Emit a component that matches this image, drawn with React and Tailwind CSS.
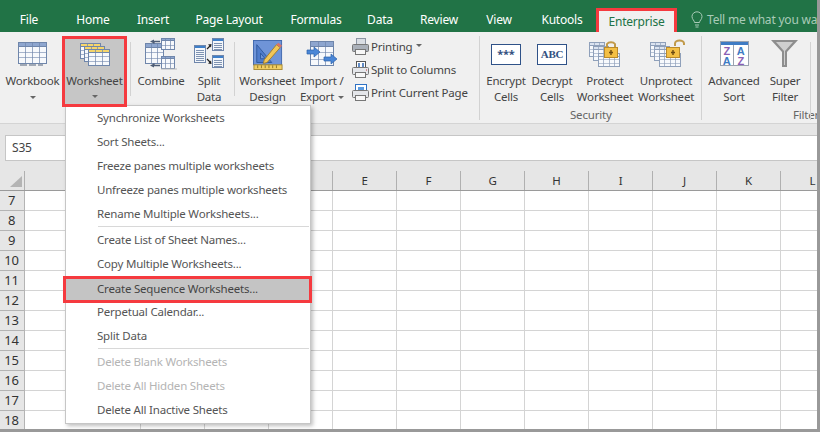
const TABS = [
  ['File', 58], ['Home', 70], ['Insert', 50], ['Page Layout', 102], ['Formulas', 72],
  ['Data', 56], ['Review', 62], ['View', 58], ['Kutools', 68],
]

const MENU = [
  ['Synchronize Worksheets'], ['Sort Sheets...'], ['Freeze panes multiple worksheets'],
  ['Unfreeze panes multiple worksheets'], ['Rename Multiple Worksheets...'], 'sep',
  ['Create List of Sheet Names...'], ['Copy Multiple Worksheets...'],
  ['Create Sequence Worksheets...', 'active'], ['Perpetual Calendar...'], ['Split Data'], 'sep',
  ['Delete Blank Worksheets', 'off'], ['Delete All Hidden Sheets', 'off'], ['Delete All Inactive Sheets'],
]

// A-D sit under the open menu
const COLS = ['', '', '', '', 'E', 'F', 'G', 'H', 'I', 'J', 'K', 'L']
const ROWS = [7, 8, 9, 10, 11, 12, 13, 14, 15, 16, 17, 18]

function Sheet({ x, y, w, h, head = '#8ea6cf', cols = 3, rows = 3, line = '#6f86ab' }) {
  const headH = Math.round(h / 5)
  return (
    <g>
      <rect x={x + 0.5} y={y + 0.5} width={w} height={h} fill="#f7f9fc" stroke={line} />
      <rect x={x + 0.5} y={y + 0.5} width={w} height={headH} fill={head} stroke={line} />
      {Array.from({ length: cols - 1 }, (_, i) => {
        const cx = Math.round(x + ((i + 1) * w) / cols) + 0.5
        return <path key={i} d={`M${cx} ${y}V${y + h}`} stroke={line} strokeOpacity="0.7" />
      })}
      {Array.from({ length: rows - 1 }, (_, i) => {
        const cy = Math.round(y + headH + ((i + 1) * (h - headH)) / rows) + 0.5
        return <path key={i} d={`M${x} ${cy}H${x + w}`} stroke={line} strokeOpacity="0.6" />
      })}
    </g>
  )
}

function Doc({ x, y, h = 13 }) {
  const lines = []
  for (let ly = y + 5.5; ly < y + h - 1; ly += 2) lines.push(`M${x + 2} ${ly}h8`)
  return (
    <g>
      <rect x={x + 0.5} y={y + 0.5} width="11" height={h - 1} fill="#f4f7fb" stroke="#6f86ab" />
      <rect x={x + 1} y={y + 1} width="10" height="2" fill="#3d7fc9" />
      <path d={lines.join('')} stroke="#7f93b2" />
    </g>
  )
}

function Lock({ x, y, open }) {
  return (
    <g>
      {open
        ? <path d={`M${x + 9} ${y + 6}V${y + 3.5}a4.5 3 0 0 1 9 0V${y + 5}`} fill="none" stroke="#c19a4a" strokeWidth="2" />
        : <path d={`M${x + 3} ${y + 7}V${y + 4}a4.5 3 0 0 1 8 0V${y + 7}`} fill="none" stroke="#c19a4a" strokeWidth="2" />}
      <rect x={x + 0.5} y={y + 7.5} width="13" height="10" fill="#f3bf45" stroke="#b98a2c" />
      <path d={`M${x + 7} ${y + 10}v5M${x + 5} ${y + 12.5}h4`} stroke="#6b4a12" strokeWidth="1.4" />
    </g>
  )
}

function Arrow({ x, y }) {
  return <path d={`M${x} ${y + 3}h7v-3l6 5-6 5v-3h-7z`} fill="#4a86d6" stroke="#2d62ab" strokeWidth="0.7" />
}

function WorkbookIcon() {
  return (
    <svg width="30" height="25" className="mt-[6px]">
      <Sheet x={0} y={0} w={28} h={21} cols={4} />
      <path d="M2 23h7M11 23h7M20 23h5" stroke="#a0a8b5" strokeWidth="2" />
    </svg>
  )
}

function WorksheetIcon() {
  return (
    <svg width="30" height="24" className="mt-[4px]">
      <Sheet x={0} y={0} w={20} h={15} head="#f5d56a" cols={3} />
      <Sheet x={4} y={3} w={20} h={15} head="#f5d56a" cols={3} />
      <Sheet x={8} y={6} w={21} h={16} head="#f5d56a" cols={3} />
    </svg>
  )
}

function CombineIcon() {
  return (
    <svg width="32" height="32" className="mt-[2px]">
      <Sheet x={0} y={5} w={18} h={20} cols={3} />
      <Sheet x={16} y={0} w={13} h={11} cols={3} rows={2} />
      <Sheet x={16} y={18} w={13} h={12} cols={3} rows={2} />
      <path d="M15 3.500H9v2M15 27.500H9v-2" fill="none" stroke="#4d5c75" strokeWidth="1.3" />
      <path d="M5 3.500l4-2v4zM5 27.500l4-2v4z" fill="#4d5c75" />
      <path d="M16 31h16" stroke="#b9b9b9" />
    </svg>
  )
}

function SplitIcon() {
  return (
    <svg width="31" height="30" className="mt-[2px]">
      <Doc x={0} y={7} h={18} />
      <Doc x={18} y={0} />
      <Doc x={18} y={17} />
      <path d="M13 11l3-3M13 21l3 3" stroke="#222" strokeWidth="1.2" />
      <path d="M17.500 6l-3.500 .5 3 3zM17.500 26l-3.500-.5 3-3z" fill="#222" />
    </svg>
  )
}

function DesignIcon() {
  return (
    <svg width="30" height="30" viewBox="0 0 32 32" className="mt-[4px]">
      <rect x="0.500" y="0.500" width="30" height="26" fill="#6f94d8" stroke="#3f68ad" />
      <path d="M4 5l16 19H4zM8 14v6h5z" fill="#4f7ccb" fillRule="evenodd" stroke="#2f5a9f" />
      <path d="M12 21L25 5l4 3-14 16-4 1z" fill="#f2c658" stroke="#a37f2a" />
      <path d="M25 5l2-2 4 3-2 2z" fill="#d9736a" />
      <rect x="1" y="26.500" width="30" height="5" fill="#f1cf63" stroke="#a88a34" />
      <path d="M5 27v3M9 27v3M13 27v3M17 27v3M21 27v3M25 27v3" stroke="#8d7326" />
    </svg>
  )
}

function ImportIcon() {
  return (
    <svg width="32" height="26" className="mt-[5px]">
      <Sheet x={4} y={0} w={23} h={24} cols={3} rows={3} />
      <Arrow x={1} y={6} />
      <Arrow x={18} y={13} />
    </svg>
  )
}

function PrinterIcon({ kind }) {
  return (
    <svg width="17" height="17">
      {kind === 0 && <rect x="4.500" y="0.500" width="9" height="6" fill="#d9dde3" stroke="#8c95a3" />}
      {kind === 1 && <g><rect x="4.500" y="0.500" width="9" height="7" fill="#fff" stroke="#555" /><path d="M7 2v4M11 2v4" stroke="#3a6fb8" strokeWidth="1.6" /></g>}
      {kind === 2 && <g><rect x="3.500" y="0.500" width="11" height="8" fill="#fff" stroke="#2f72c4" /><rect x="6" y="3" width="6" height="3" fill="#5b9be0" /></g>}
      <rect x="0.500" y="6.500" width="16" height="7" rx="1" fill={kind === 0 ? '#aab0b9' : '#e4e6ea'} stroke="#777" />
      <rect x="3.500" y="11.500" width="10" height="5" fill="#f7f7f7" stroke="#777" />
      {kind === 1 && <path d="M14 9h1" stroke="#c33" />}
    </svg>
  )
}

function SheetsLock({ open }) {
  return (
    <svg width="32" height="28" className="mt-[4px] overflow-visible">
      <Sheet x={0} y={2} w={15} h={14} head="#dbe3f0" line="#8fa0ba" cols={3} />
      <Sheet x={4} y={6} w={15} h={14} head="#dbe3f0" line="#8fa0ba" cols={3} />
      <Sheet x={9} y={13} w={21} h={13} head="#f0f3f8" line="#8fa0ba" cols={4} />
      <Lock x={open ? 16 : 15} y={0} open={open} />
    </svg>
  )
}

function CipherIcon({ children, serif }) {
  return (
    <div className={`mt-[8px] flex h-[21px] w-[30px] items-center justify-center border border-[#2f5288] bg-white text-[11px] font-bold text-[#33507f] ${serif ? "font-['Liberation_Serif',serif]" : ''}`}>
      {children}
    </div>
  )
}

function SortIcon() {
  return (
    <div className="mt-[5px] flex h-[25px] w-[29px] flex-col border border-[#9aa3b0] bg-white">
      <div className="h-[3px] shrink-0 bg-[#3f7cc4]" />
      <div className="grid flex-1 grid-cols-2 text-center font-['Liberation_Sans',sans-serif] text-[11px] leading-[10px] font-bold tracking-normal">
        <span className="border-r border-[#9aa3b0] pt-[1px]"><span className="block text-[#8a5fb5]">Z</span><span className="block text-[#3f7cc4]">A</span></span>
        <span className="pt-[1px]"><span className="block text-[#3f7cc4]">A</span><span className="block text-[#8a5fb5]">Z</span></span>
      </div>
    </div>
  )
}

function FunnelIcon() {
  return (
    <svg width="28" height="27" className="mt-[4px]">
      <path d="M0 0h27L16 12v15h-5V12z" fill="#8e8e8e" />
      <path d="M5 2h17l-8 9v14h-1V11z" fill="#cfcfcf" />
    </svg>
  )
}

function Caret({ className = '' }) {
  return <span className={`inline-block border-x-[3px] border-t-[3px] border-x-transparent border-t-[#666] ${className}`} />
}

function RibbonButton({ w, icon, lines, caret, active }) {
  return (
    <div className={`flex shrink-0 flex-col items-center whitespace-nowrap ${w} ${active ? 'relative z-30 h-[71px] border-[3px] border-[#f53a3f] bg-[#c6c6c6]' : 'h-[69px]'}`}>
      <div className={`flex shrink-0 justify-center ${active ? 'h-[34px]' : 'h-[37px]'}`}>{icon}</div>
      <div className="h-4 leading-4">{lines[0]}</div>
      {lines[1] && <div className="h-4 leading-4">{lines[1]}{caret === 'inline' && <Caret className="mb-[2px] ml-1" />}</div>}
      {caret === true && <div className="flex h-4 items-center justify-center"><Caret /></div>}
    </div>
  )
}

function Sep({ className }) {
  return <div className={`w-px shrink-0 bg-[#d2d2d2] ${className}`} />
}

function SmallButton({ kind, children }) {
  return (
    <div className="flex h-[23px] items-center gap-[2px] whitespace-nowrap">
      <PrinterIcon kind={kind} />
      {children}
    </div>
  )
}

function Ribbon() {
  return (
    <div className="relative flex h-[92px] shrink-0 border-b border-[#d4d4d4] bg-[#f0f0f0] pl-[3px] pt-1 text-[#444]">
      <RibbonButton w="w-[59px]" icon={<WorkbookIcon />} lines={['Workbook']} caret />
      <RibbonButton w="w-[65px]" icon={<WorksheetIcon />} lines={['Worksheet']} caret active />
      <Sep className="ml-[3px] mt-[6px] h-[54px]" />
      <RibbonButton w="w-[60px]" icon={<CombineIcon />} lines={['Combine']} />
      <RibbonButton w="w-[36px]" icon={<SplitIcon />} lines={['Split', 'Data']} />
      <Sep className="ml-[7px] mt-[6px] h-[54px]" />
      <RibbonButton w="w-[65px]" icon={<DesignIcon />} lines={['Worksheet', 'Design']} />
      <RibbonButton w="w-[44px]" icon={<ImportIcon />} lines={['Import /', 'Export']} caret="inline" />
      <div className="-mt-px w-[132px] shrink-0 pl-2">
        <SmallButton kind={0}>Printing<Caret className="mb-[2px] ml-[2px]" /></SmallButton>
        <SmallButton kind={1}>Split to Columns</SmallButton>
        <SmallButton kind={2}>Print Current Page</SmallButton>
      </div>
      <Sep className="ml-[3px] h-[84px]" />
      <div className="relative flex shrink-0">
        <RibbonButton w="w-[52px]" icon={<CipherIcon>***</CipherIcon>} lines={['Encrypt', 'Cells']} />
        <RibbonButton w="w-[40px]" icon={<CipherIcon serif>ABC</CipherIcon>} lines={['Decrypt', 'Cells']} />
        <RibbonButton w="w-[66px]" icon={<SheetsLock />} lines={['Protect', 'Worksheet']} />
        <RibbonButton w="w-[56px]" icon={<SheetsLock open />} lines={['Unprotect', 'Worksheet']} />
        <div className="w-[7px]" />
        <div className="absolute left-[90px] top-[70px] text-[#666]">Security</div>
      </div>
      <Sep className="h-[84px]" />
      <div className="relative flex shrink-0">
        <RibbonButton w="w-[64px]" icon={<SortIcon />} lines={['Advanced', 'Sort']} />
        <RibbonButton w="w-[38px]" icon={<FunnelIcon />} lines={['Super', 'Filter']} />
        <div className="w-[6px]" />
        <div className="absolute left-[91px] top-[70px] whitespace-nowrap text-[#666]">Filter</div>
      </div>
      <Sep className="z-10 mt-[6px] h-[78px]" />
    </div>
  )
}

function Sheetgrid() {
  return (
    <div className="grid grid-cols-[25px_116px_repeat(11,64px)] overflow-hidden">
      <div className="relative h-[30px] border-b border-[#9a9a9a] bg-[#e6e6e6]">
        <div className="absolute bottom-[3px] right-[3px] h-0 w-0 border-b-[11px] border-l-[12px] border-b-[#b4b4b4] border-l-transparent" />
        <div className="absolute bottom-0 right-0 h-[19px] w-px bg-[#b0b0b0]" />
      </div>
      {COLS.map((c, i) => (
        <div key={i} className="flex h-[30px] items-end justify-center border-b border-[#9a9a9a] bg-[#e6e6e6] text-[#333]">
          <div className="flex h-[19px] w-full items-center justify-center border-r border-[#b0b0b0]">{c}</div>
        </div>
      ))}
      {ROWS.map((r) => (
        <div key={r} className="contents">
          <div className="flex h-5 items-center justify-center border-b border-r border-[#b4b4b4] bg-[#e6e6e6] pr-[1px] text-[13px] text-[#333]">{r}</div>
          {COLS.map((c, i) => <div key={i} className="h-5 border-b border-r border-[#d4d4d4] bg-white" />)}
        </div>
      ))}
    </div>
  )
}

function Menu() {
  return (
    <div className="absolute left-[65px] top-[105px] z-20 w-[246px] border border-[#c6c6c6] bg-white pb-px text-[#555] shadow-[2px_2px_4px_rgba(0,0,0,0.25)]">
      {MENU.map((m, i) => {
        if (m === 'sep') return <div key={i} className="mb-px ml-[32px] mr-[1px] h-px bg-[#d8d8d8]" />
        const [label, state] = m
        if (state === 'active') {
          return (
            <div key={i} className="relative flex h-6 items-center pl-[31px] text-[#444]">
              <div className="absolute -bottom-[3px] -left-[3px] -right-[2px] top-0 border-[3px] border-[#f53a3f] bg-[#c4c4c4]" />
              <span className="relative top-[1px]">{label}</span>
            </div>
          )
        }
        return <div key={i} className={`flex h-6 items-center pl-[31px] ${state === 'off' ? 'text-[#b4b4b4]' : ''}`}>{label}</div>
      })}
    </div>
  )
}

export default function App() {
  return (
    <div className="flex h-[432px] w-[820px] flex-col overflow-hidden bg-[#999] font-['Noto_Sans',sans-serif] text-[11.5px] tracking-[-0.2px]">
      <div className="relative flex h-[429px] w-[817px] flex-col overflow-hidden bg-white">
        {/* tab strip */}
        <div className="flex h-8 shrink-0 items-stretch bg-[#217346] text-[12px] text-white">
          {TABS.map(([t, w]) => (
            <div key={t} className="flex shrink-0 items-center justify-center pt-[8px]" style={{ width: w }}>{t}</div>
          ))}
          <div className="mt-2 flex w-[81px] shrink-0 items-center justify-center border-x-[3px] border-t-[3px] border-[#f53a3f] bg-[#f0f0f0] text-[#217346]">Enterprise</div>
          <svg width="12" height="17" viewBox="0 0 12 17" fill="none" stroke="#a9cbb8" className="ml-[14px] mt-[11px] shrink-0">
            <path d="M3.500 11.500c0-2-2.500-3-2.500-6a5 4.700 0 0 1 10 0c0 3-2.500 4-2.500 6zM4 14h4M4.500 16h3" />
          </svg>
          <div className="ml-[4px] flex items-center whitespace-nowrap pt-[8px] text-[#a9cbb8]">Tell me what you want to do</div>
        </div>

        <Ribbon />
        <div className="h-[11px] shrink-0 bg-[#e6e6e6]" />

        {/* name box + formula bar */}
        <div className="flex h-[26px] shrink-0 bg-[#e6e6e6]">
          <div className="w-[5px]" />
          <div className="flex flex-1 items-center border-y border-l border-[#c6c6c6] bg-white pl-[6px] text-[12px] text-[#444]">S35</div>
        </div>

        <Sheetgrid />
        <Menu />
      </div>
    </div>
  )
}
